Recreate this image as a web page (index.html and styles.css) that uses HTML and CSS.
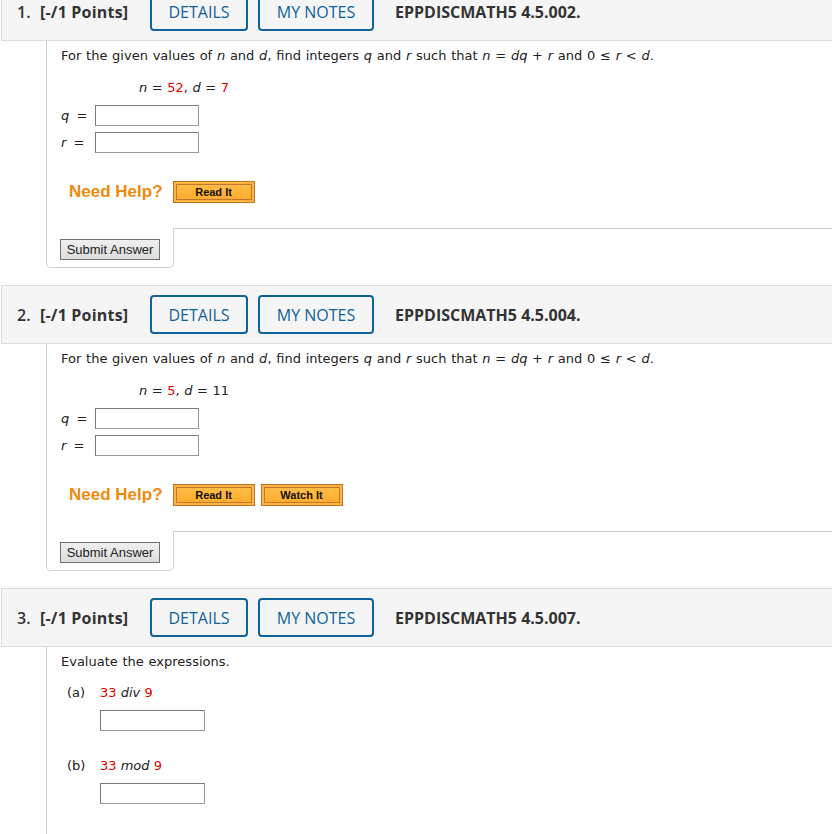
FILE: index.html
```html
<!DOCTYPE html>
<html>
<head>
<meta charset="utf-8">
<link rel="stylesheet" href="styles.css">
</head>
<body>
<div class="page">

  <div class="question">
    <div class="qhead">
      <span class="qnum">1.</span>
      <span class="pts">[-/1 Points]</span>
      <span class="hbtn details">DETAILS</span>
      <span class="hbtn notes">MY NOTES</span>
      <span class="qid">EPPDISCMATH5 4.5.002.</span>
    </div>
    <div class="qbody">
      <p class="prompt">For the given values of <i>n</i> and <i>d</i>, find integers <i>q</i> and <i>r</i> such that <i>n</i> = <i>dq</i> + <i>r</i> and 0 ≤ <i>r</i> &lt; <i>d</i>.</p>
      <p class="given"><i>n</i> = <span class="red">52</span>, <i>d</i> = <span class="red">7</span></p>
      <div class="answers">
        <span class="lbl"><i>q</i> =</span><span class="box"></span>
        <span class="lbl"><i>r</i> =</span><span class="box"></span>
      </div>
      <div class="help">
        <span class="needhelp">Need Help?</span>
        <span class="obtn">Read It</span>
      </div>
    </div>
    <div class="submit-row">
      <div class="tab"><span class="submit">Submit Answer</span></div>
      <div class="rest"></div>
    </div>
  </div>

  <div class="question">
    <div class="qhead">
      <span class="qnum">2.</span>
      <span class="pts">[-/1 Points]</span>
      <span class="hbtn details">DETAILS</span>
      <span class="hbtn notes">MY NOTES</span>
      <span class="qid">EPPDISCMATH5 4.5.004.</span>
    </div>
    <div class="qbody">
      <p class="prompt">For the given values of <i>n</i> and <i>d</i>, find integers <i>q</i> and <i>r</i> such that <i>n</i> = <i>dq</i> + <i>r</i> and 0 ≤ <i>r</i> &lt; <i>d</i>.</p>
      <p class="given"><i>n</i> = <span class="red">5</span>, <i>d</i> = 11</p>
      <div class="answers">
        <span class="lbl"><i>q</i> =</span><span class="box"></span>
        <span class="lbl"><i>r</i> =</span><span class="box"></span>
      </div>
      <div class="help">
        <span class="needhelp">Need Help?</span>
        <span class="obtn">Read It</span>
        <span class="obtn">Watch It</span>
      </div>
    </div>
    <div class="submit-row">
      <div class="tab"><span class="submit">Submit Answer</span></div>
      <div class="rest"></div>
    </div>
  </div>

  <div class="question last">
    <div class="qhead">
      <span class="qnum">3.</span>
      <span class="pts">[-/1 Points]</span>
      <span class="hbtn details">DETAILS</span>
      <span class="hbtn notes">MY NOTES</span>
      <span class="qid">EPPDISCMATH5 4.5.007.</span>
    </div>
    <div class="qbody tall">
      <p class="prompt">Evaluate the expressions.</p>
      <div class="part">
        <p class="plabel"><span class="pl">(a)</span><span class="red">33</span> <i>div</i> <span class="red">9</span></p>
        <span class="box wide"></span>
      </div>
      <div class="part">
        <p class="plabel"><span class="pl">(b)</span><span class="red">33</span> <i>mod</i> <span class="red">9</span></p>
        <span class="box wide"></span>
      </div>
    </div>
  </div>

</div>
</body>
</html>
```

FILE: styles.css
```css
html, body {
  margin: 0;
  padding: 0;
  background: #fff;
  overflow: hidden;
}
.page {
  margin-top: -18px;
  padding-left: 1px;
  width: 850px;
  font-family: "DejaVu Sans", Verdana, sans-serif;
  font-size: 13px;
  color: #222;
}
.question {
  margin-bottom: 17px;
}
.qhead {
  box-sizing: border-box;
  height: 59px;
  display: flex;
  align-items: center;
  background: #f5f5f5;
  border: 1px solid #dcdcdc;
  padding-left: 15px;
  font-family: "Open Sans", sans-serif;
  font-size: 16px;
  color: #333;
}
.qnum {
  font-weight: 600;
  width: 23px;
}
.pts {
  font-weight: 700;
  letter-spacing: 0.2px;
  width: 110px;
}
.hbtn {
  box-sizing: border-box;
  height: 39px;
  border: 2px solid #10629b;
  border-radius: 4px;
  color: #10629b;
  display: flex;
  align-items: center;
  justify-content: center;
  font-weight: 500;
}
.details {
  width: 98px;
}
.notes {
  width: 116px;
  margin-left: 10px;
}
.qid {
  font-weight: 700;
  margin-left: 21px;
}
.qbody {
  margin-left: 45px;
  border-left: 1px solid #cfcfcf;
  padding: 7px 14px 25px 14px;
}
.qbody.tall {
  height: 300px;
}
.prompt {
  margin: 0;
  line-height: 16px;
  word-spacing: 0.6px;
}
i {
  font-style: oblique;
}
.red {
  color: #e00000;
}
.given {
  margin: 16px 0 0 78px;
  line-height: 16px;
  word-spacing: 0.4px;
}
.answers {
  margin-top: 9px;
  display: grid;
  grid-template-columns: 34px 104px;
  row-gap: 6px;
  align-items: center;
  word-spacing: 3px;
}
.lbl {
  line-height: 16px;
}
.box {
  box-sizing: border-box;
  display: block;
  width: 104px;
  height: 21px;
  border: 1px solid #999;
  border-top-color: #7a7a7a;
  border-left-color: #7a7a7a;
  background: #fff;
}
.box.wide {
  width: 105px;
  margin-left: 39px;
}
.help {
  margin-top: 28px;
  padding-left: 8px;
  display: flex;
  align-items: center;
  height: 22px;
}
.needhelp {
  font-family: "Liberation Sans", Arial, sans-serif;
  font-weight: 700;
  font-size: 17px;
  color: #f08a0c;
  margin-right: 10px;
}
.obtn {
  box-sizing: border-box;
  width: 82px;
  height: 22px;
  margin-right: 6px;
  display: flex;
  align-items: center;
  justify-content: center;
  font-family: "Liberation Sans", Arial, sans-serif;
  font-weight: 700;
  font-size: 11px;
  color: #111;
  border: 1px solid #c0722a;
  background: linear-gradient(#ffc04a, #ffa92a);
  box-shadow: inset 0 0 0 2px #ffb43c, inset 0 0 0 3px #c07830;
}
.submit-row {
  display: flex;
  margin-left: 45px;
}
.tab {
  border: 1px solid #cfcfcf;
  border-top: none;
  border-radius: 0 0 5px 5px;
  padding: 11px 13px 7px 13px;
}
.rest {
  flex: 1;
  border-top: 1px solid #cfcfcf;
}
.submit {
  box-sizing: border-box;
  display: flex;
  align-items: center;
  justify-content: center;
  width: 100px;
  height: 21px;
  font-family: "Liberation Sans", Arial, sans-serif;
  font-size: 13px;
  color: #222;
  border: 1px solid #707070;
  background: linear-gradient(#f0f0f0, #dcdcdc);
}
.part {
  margin-top: 15px;
}
.plabel {
  margin: 0 0 9px 6px;
  line-height: 16px;
}
.pl {
  display: inline-block;
  width: 33px;
}
.part + .part {
  margin-top: 27px;
}
```
